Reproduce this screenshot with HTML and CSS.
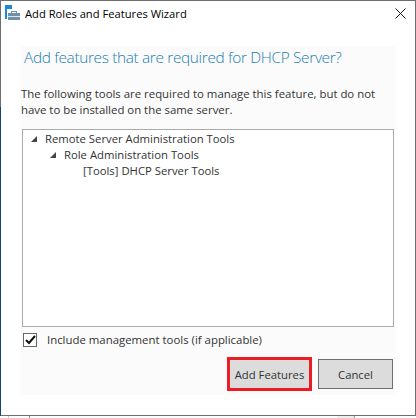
FILE: index.html
```html
<!DOCTYPE html>
<html lang="en">
<head>
<meta charset="utf-8">
<title>Add Roles and Features Wizard</title>
<link rel="stylesheet" href="styles.css">
</head>
<body>
<div class="window">
  <header class="titlebar">
    <svg class="app-icon" width="15" height="16" viewBox="0 0 15 16">
      <rect x="0" y="0" width="7" height="4" fill="#1b87d8"/>
      <rect x="0" y="4" width="2" height="10" fill="#1b87d8"/>
      <rect x="3" y="8" width="12" height="7" fill="#6f90a8"/>
      <rect x="3" y="11" width="12" height="1" fill="#dce6ec"/>
      <rect x="6.500" y="6.500" width="5" height="2" fill="none" stroke="#6f90a8"/>
    </svg>
    <span class="title">Add Roles and Features Wizard</span>
    <svg class="close" width="11" height="11" viewBox="0 0 11 11">
      <path d="M.5.5l10 10M10.500.5l-10 10" stroke="#1a1a1a" fill="none"/>
    </svg>
  </header>
  <main class="panel">
    <h1 class="heading">Add features that are required for DHCP Server?</h1>
    <p class="intro">The following tools are required to manage this feature, but do not have to be installed on the same server.</p>
    <div class="tree">
      <div class="node"><span class="arrow"></span>Remote Server Administration Tools</div>
      <div class="node level-1"><span class="arrow"></span>Role Administration Tools</div>
      <div class="node level-2">[Tools] DHCP Server Tools</div>
    </div>
    <label class="option">
      <span class="checkbox">
        <svg width="11" height="10" viewBox="0 0 11 10"><path d="M1 5l3 3 6-7" stroke="#111" stroke-width="2" fill="none"/></svg>
      </span>
      Include management tools (if applicable)
    </label>
    <div class="actions">
      <button class="btn btn-primary">Add Features</button>
      <button class="btn">Cancel</button>
    </div>
  </main>
</div>
<div class="behind">
  <span class="sliver sliver-a"></span>
  <span class="sliver sliver-b"></span>
  <span class="sliver sliver-c"></span>
</div>
</body>
</html>
```
FILE: styles.css
```css
html, body { margin: 0; padding: 0; background: #fff; }
body { width: 416px; height: 418px; overflow: hidden; font-family: "Open Sans", "Noto Sans", sans-serif; }
.window {
  position: relative; box-sizing: border-box; width: 416px; height: 416px;
  border: 1px solid #6e6e6e;
  background: #fff; display: flex; flex-direction: column;
}
.window::before { content: ""; position: absolute; left: -1px; top: 106px; bottom: -1px; width: 1px; background: #12496a; }
.titlebar { height: 45px; flex: none; display: flex; align-items: flex-start; padding: 4px 9px 0 4px; box-sizing: border-box; }
.app-icon { margin: 0 5px 0 0; flex: none; }
.title { font-size: 11.2px; line-height: 15px; margin-top: 1px; color: #000; flex: 1; }
.close { margin-top: 3px; }
.panel {
  margin-left: 20px; width: 374px; height: 349px; background: #fbfbfb;
  display: flex; flex-direction: column;
}
.heading { margin: 0 0 0 3px; font-size: 15.4px; letter-spacing: -.34px; font-weight: 300; line-height: 20px; padding-top: 2px; color: #1a7fb0; height: 30px; white-space: nowrap; }
.intro { margin: 8px 0 0 0; font-size: 11.4px; line-height: 16px; color: #333; width: 370px; height: 43px; }
.tree { box-sizing: border-box; margin-left: 1px; width: 372px; height: 198px; background: #fff; border: 1px solid #aaa; padding: 1px 0 0 8px; font-size: 11.3px; line-height: 16px; color: #333; }
.node { display: flex; align-items: center; }
.level-1 { padding-left: 19px; }
.level-2 { padding-left: 52px; }
.arrow { width: 0; height: 0; border-style: solid; border-width: 0 0 6px 6px; border-color: transparent transparent #444 transparent; margin-right: 8px; }
.option { display: flex; align-items: center; margin: 5px 0 0 2px; font-size: 11.4px; color: #333; line-height: 16px; }
.checkbox { box-sizing: border-box; width: 14px; height: 14px; border: 1px solid #666; background: #fff; display: flex; align-items: center; justify-content: center; margin-right: 10px; }
.actions { display: flex; justify-content: flex-end; gap: 6px; padding-right: 2px; margin-top: 9px; align-items: center; }
.btn { box-sizing: border-box; width: 75px; height: 30px; background: #dcdcdc; border: 1px solid #707070; font: inherit; font-size: 11.3px; color: #333; padding: 0; }
.btn-primary { width: 85px; height: 34px; border: 3px solid #ed1c24; }
.behind { display: flex; height: 2px; }
.sliver { display: block; height: 2px; }
.sliver-a { width: 1px; margin-left: 8px; background: #ccc; }
.sliver-b { width: 1px; margin-left: 20px; background: #888; }
.sliver-c { width: 17px; margin-left: 307px; background: #eee; border-right: 1px solid #999; }
```
